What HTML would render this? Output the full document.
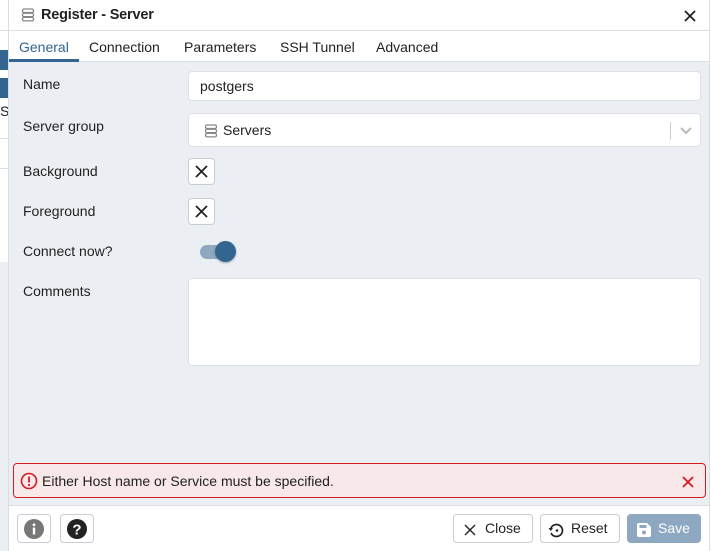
<!DOCTYPE html>
<html><head><meta charset="utf-8"><style>
*{box-sizing:border-box;margin:0;padding:0}
body{width:711px;height:551px;position:relative;overflow:hidden;background:#fff;font-family:"Liberation Sans",sans-serif;font-size:14px;color:#222}
.bg1{position:absolute;left:0;top:50px;width:9px;height:20px;background:#326690}
.bg2{position:absolute;left:0;top:78px;width:9px;height:20px;background:#326690}
.bgs{position:absolute;left:0;top:103px;font-size:14px}
.line{position:absolute;left:0;width:9px;height:1px;background:#ddd}
.dlg{position:absolute;left:8px;top:0;width:702px;height:551px;background:#ebeef3;border-left:1px solid #ddd;border-right:1px solid #ddd}
.title{position:absolute;left:0;top:0;right:0;height:31px;background:#fff;border-bottom:1px solid #dde0e6}
.title span{position:absolute;left:32px;top:7px;font-size:14.5px;font-weight:bold;color:#222;letter-spacing:-.2px}
.tabs{position:absolute;left:0;top:31px;right:0;height:31px;background:#fff;border-bottom:1px solid #dde0e6}
.tab{position:absolute;top:8px;font-size:14px;color:#222}
.lbl{position:absolute;left:14px;font-size:14px;color:#222}
.inp{position:absolute;left:179px;width:513px;background:#fff;border:1px solid #dde0e6;border-radius:4px}
.cb{position:absolute;left:179px;width:27px;height:27px;background:#fff;border:1px solid #c9ced6;border-radius:4px}
.err{position:absolute;left:4px;top:463px;width:693px;height:35px;background:#f9e8ea;border:1px solid #d6191f;border-radius:4px}
.foot{position:absolute;left:0;top:505px;right:0;bottom:0;background:#fff;border-top:1px solid #dde0e6}
.btn{position:absolute;top:8px;height:29px;border:1px solid #c9ced6;border-radius:4px;background:#fff;font-size:14px;color:#222}
</style></head><body>
<div class="line" style="top:30px"></div>
<div class="bg1"></div><div class="bg2"></div><div class="bgs">S</div>
<div class="line" style="top:138px"></div>
<div class="line" style="top:168px"></div>
<div style="position:absolute;left:0;top:262px;width:9px;height:289px;background:#ebeef3"></div>
<div class="dlg">
 <div class="title">
  <svg style="position:absolute;left:12px;top:8px" width="14" height="14" viewBox="0 0 14 14"><g fill="none" stroke="#888" stroke-width="1.3"><rect x="1.5" y="1" width="11" height="3.5" rx="1.5"/><rect x="1.5" y="5.2" width="11" height="3.5" rx="1.5"/><rect x="1.5" y="9.4" width="11" height="3.5" rx="1.5"/></g></svg>
  <span>Register - Server</span>
  <svg style="position:absolute;left:675px;top:10px" width="12" height="12" viewBox="0 0 12 12"><path d="M1 1L11 11M11 1L1 11" stroke="#222" stroke-width="1.8"/></svg>
 </div>
 <div class="tabs">
  <span class="tab" style="left:10px;color:#326690">General</span>
  <div style="position:absolute;left:0;top:28px;width:70px;height:3px;background:#326690"></div>
  <span class="tab" style="left:80px">Connection</span>
  <span class="tab" style="left:175px">Parameters</span>
  <span class="tab" style="left:271px">SSH Tunnel</span>
  <span class="tab" style="left:367px">Advanced</span>
 </div>
 <span class="lbl" style="top:76px">Name</span>
 <div class="inp" style="top:71px;height:30px"><span style="position:absolute;left:11px;top:6px">postgers</span></div>
 <span class="lbl" style="top:118px">Server group</span>
 <div class="inp" style="top:113px;height:34px">
  <svg style="position:absolute;left:15px;top:10px" width="14" height="14" viewBox="0 0 14 14"><g fill="none" stroke="#888" stroke-width="1.3"><rect x="1.5" y="1" width="11" height="3.5" rx="1.5"/><rect x="1.5" y="5.2" width="11" height="3.5" rx="1.5"/><rect x="1.5" y="9.4" width="11" height="3.5" rx="1.5"/></g></svg>
  <span style="position:absolute;left:34px;top:8px">Servers</span>
  <div style="position:absolute;left:481px;top:8px;width:1px;height:18px;background:#ccc"></div>
  <svg style="position:absolute;left:490px;top:11px" width="14" height="10" viewBox="0 0 14 10"><path d="M2 3l5 5 5-5" fill="none" stroke="#bbb" stroke-width="2"/></svg>
 </div>
 <span class="lbl" style="top:163px">Background</span>
 <div class="cb" style="top:158px"><svg style="position:absolute;left:6px;top:6px" width="13" height="13" viewBox="0 0 13 13"><path d="M1 1L12 12M12 1L1 12" stroke="#222" stroke-width="1.8"/></svg></div>
 <span class="lbl" style="top:203px">Foreground</span>
 <div class="cb" style="top:198px"><svg style="position:absolute;left:6px;top:6px" width="13" height="13" viewBox="0 0 13 13"><path d="M1 1L12 12M12 1L1 12" stroke="#222" stroke-width="1.8"/></svg></div>
 <span class="lbl" style="top:243px">Connect now?</span>
 <div style="position:absolute;left:191px;top:245px;width:34px;height:14px;border-radius:7px;background:#8ea8c2"></div>
 <div style="position:absolute;left:206px;top:241px;width:21px;height:21px;border-radius:50%;background:#326690;box-shadow:0 1px 2px rgba(0,0,0,.3)"></div>
 <span class="lbl" style="top:283px">Comments</span>
 <div class="inp" style="top:278px;height:88px"></div>
 <div class="err">
  <svg style="position:absolute;left:6px;top:8px" width="18" height="18" viewBox="0 0 18 18"><circle cx="9" cy="9" r="7.5" fill="none" stroke="#d6191f" stroke-width="1.6"/><path d="M9 4.5v6" stroke="#d6191f" stroke-width="1.8"/><circle cx="9" cy="13" r="1.1" fill="#d6191f"/></svg>
  <span style="position:absolute;left:28px;top:9px;color:#222">Either Host name or Service must be specified.</span>
  <svg style="position:absolute;left:668px;top:12px" width="12" height="12" viewBox="0 0 12 12"><path d="M1 1L11 11M11 1L1 11" stroke="#d6191f" stroke-width="1.8"/></svg>
 </div>
 <div class="foot">
  <div class="btn" style="left:8px;width:34px">
   <svg style="position:absolute;left:6px;top:4px" width="20" height="20" viewBox="0 0 20 20"><circle cx="10" cy="10" r="10" fill="#777"/><rect x="8.8" y="8.5" width="2.4" height="7" fill="#fff"/><circle cx="10" cy="5.8" r="1.4" fill="#fff"/></svg>
  </div>
  <div class="btn" style="left:51px;width:34px">
   <svg style="position:absolute;left:6px;top:4px" width="20" height="20" viewBox="0 0 20 20"><circle cx="10" cy="10" r="10" fill="#222"/><text x="10" y="15.5" text-anchor="middle" fill="#fff" font-size="15" font-weight="bold" font-family="Liberation Sans">?</text></svg>
  </div>
  <div class="btn" style="left:444px;width:80px">
   <svg style="position:absolute;left:10px;top:9px" width="12" height="12" viewBox="0 0 12 12"><path d="M1 1L11 11M11 1L1 11" stroke="#222" stroke-width="1.4"/></svg>
   <span style="position:absolute;left:31px;top:5px">Close</span>
  </div>
  <div class="btn" style="left:531px;width:80px">
   <svg style="position:absolute;left:7px;top:7px" width="16" height="16" viewBox="0 0 16 16"><path d="M3 6A6 6 0 1 1 3 11" fill="none" stroke="#222" stroke-width="1.7"/><path d="M0.5 6h4.5l-2.2 3z" fill="#222"/><circle cx="9" cy="8.5" r="1.3" fill="#222"/></svg>
   <span style="position:absolute;left:30px;top:5px">Reset</span>
  </div>
  <div class="btn" style="left:618px;width:74px;background:#8ea8c2;border-color:#8ea8c2;color:#fff">
   <svg style="position:absolute;left:9px;top:8px" width="14" height="14" viewBox="0 0 14 14"><path d="M0 2a2 2 0 0 1 2-2h8l4 4v8a2 2 0 0 1-2 2H2a2 2 0 0 1-2-2z" fill="#fff"/><rect x="2.5" y="2" width="7" height="3" fill="#8ea8c2"/><circle cx="7" cy="9.5" r="2" fill="#8ea8c2"/></svg>
   <span style="position:absolute;left:30px;top:5px">Save</span>
  </div>
 </div>
</div>
</body></html>
